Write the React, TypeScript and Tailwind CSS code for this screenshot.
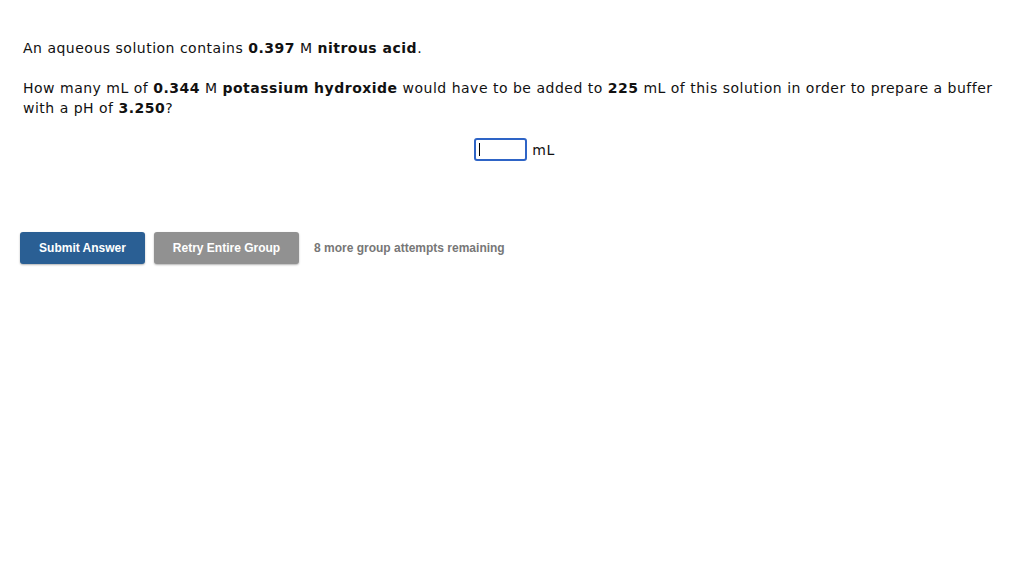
import React from "react";

export default function App() {
  return (
    <div className="min-h-screen bg-white text-black">
      <div className="pl-[23px] pr-[14px] pt-[38px] font-['DejaVu_Sans',Verdana,sans-serif] text-[14px] leading-[20px] tracking-[0.5px] text-[#111]">
        <p>
          An aqueous solution contains <b>0.397</b> M <b>nitrous acid</b>.
        </p>
        <p className="mt-[20px]">
          How many mL of <b>0.344</b> M <b>potassium hydroxide</b> would have to be added to <b>225</b> mL of this
          solution in order to prepare a buffer with a pH of <b>3.250</b>?
        </p>
        <div className="mt-[20px] flex items-center justify-center gap-[5px] pr-[4px]">
          <div className="relative">
            <input
              type="text"
              className="block h-[23px] w-[53px] rounded-[3px] border-2 border-[#2e64c6] px-1 outline-none"
            />
            <span className="absolute left-[5px] top-[5px] h-[13px] w-px bg-black" />
          </div>
          <span>mL</span>
        </div>
      </div>
      <div className="mt-[71px] flex items-center px-[20px] font-['Liberation_Sans',Arial,sans-serif] text-[12px] font-bold">
        <button className="h-[32px] w-[125px] rounded-[3px] bg-[#2a5f94] text-white shadow-[0_1px_2px_rgba(0,0,0,0.3)]">
          Submit Answer
        </button>
        <button className="ml-[9px] h-[32px] w-[145px] rounded-[3px] bg-[#919191] text-white shadow-[0_1px_2px_rgba(0,0,0,0.3)]">
          Retry Entire Group
        </button>
        <span className="ml-[15px] text-[#777]">8 more group attempts remaining</span>
      </div>
    </div>
  );
}
